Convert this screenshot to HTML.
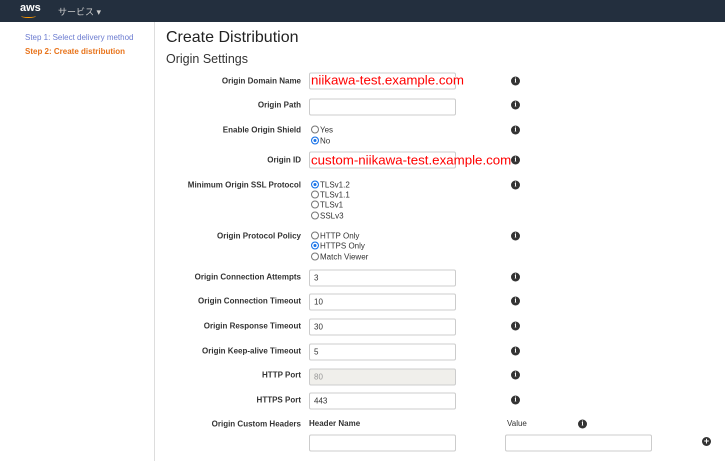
<!DOCTYPE html>
<html><head><meta charset="utf-8"><style>
body{margin:0;width:725px;height:461px;overflow:hidden;background:#fff;font-family:"Liberation Sans","Noto Sans CJK JP",sans-serif;position:relative}
.a{position:absolute}
.nav{left:0;top:0;width:725px;height:22px;background:#232f3e}
.lbl{position:absolute;right:424px;font-size:8px;font-weight:bold;color:#333;white-space:nowrap;transform:translateY(-50%)}
.inp{position:absolute;left:309px;border:1px solid #ccc;border-radius:2px;background:#fff;font-size:8px;color:#333;line-height:15px;padding-left:4px;box-sizing:border-box;width:147px;height:17px;transform:translateY(-50%)}
.info{position:absolute;left:511px;width:9px;height:9px;border-radius:50%;background:#333;color:#fff;font-size:7px;font-weight:bold;text-align:center;line-height:9px;font-family:"Liberation Serif",serif;transform:translateY(-50%)}
.rad{position:absolute;left:311px;font-size:8px;color:#333;transform:translateY(-50%);white-space:nowrap}
.rad i{display:inline-block;width:6px;height:6px;border:1px solid #777;border-radius:50%;vertical-align:-1px;margin-right:1px}
.rad i.on{background:#1a73e8;border-color:#1a73e8;box-shadow:inset 0 0 0 1.5px #fff}
.red{position:absolute;left:311px;font-size:13.3px;color:#f00;text-shadow:0 0 2px #fff,0 0 2px #fff;transform:translateY(-50%);white-space:nowrap}
</style></head><body>
<div class="a nav"></div>
<div class="a" style="left:20px;top:2px;color:#fff;font-size:11px;font-weight:bold">aws</div>
<div class="a" style="left:21px;top:14px;width:15px;height:3px;border-bottom:1.5px solid #f90;border-radius:0 0 50% 50%"></div>
<div class="a" style="left:58px;top:5px;color:#ccc;font-size:9px">サービス ▾</div>
<div class="a" style="left:154px;top:22px;width:1px;height:439px;background:#ddd"></div>
<div class="a" style="left:25px;top:33px;font-size:8px;color:#6b7bd0">Step 1: Select delivery method</div>
<div class="a" style="left:25px;top:47px;font-size:8px;color:#e8731a;font-weight:bold">Step 2: Create distribution</div>
<div class="a" style="left:166px;top:29px;font-size:16px;color:#222">Create Distribution</div>
<div class="a" style="left:166px;top:52px;font-size:12.5px;color:#333">Origin Settings</div>

<div class="lbl" style="top:81px">Origin Domain Name</div><div class="inp" style="top:81px"></div><div class="red" style="top:80px">niikawa-test.example.com</div><div class="info" style="top:81px">i</div>
<div class="lbl" style="top:105px">Origin Path</div><div class="inp" style="top:107px"></div><div class="info" style="top:105px">i</div>
<div class="lbl" style="top:130px">Enable Origin Shield</div><div class="rad" style="top:130px"><i></i>Yes</div><div class="rad" style="top:141px"><i class="on"></i>No</div><div class="info" style="top:130px">i</div>
<div class="lbl" style="top:160px">Origin ID</div><div class="inp" style="top:160px"></div><div class="red" style="top:160px">custom-niikawa-test.example.com</div><div class="info" style="top:160px">i</div>
<div class="lbl" style="top:185px">Minimum Origin SSL Protocol</div><div class="rad" style="top:185px"><i class="on"></i>TLSv1.2</div><div class="rad" style="top:195px"><i></i>TLSv1.1</div><div class="rad" style="top:205px"><i></i>TLSv1</div><div class="rad" style="top:216px"><i></i>SSLv3</div><div class="info" style="top:185px">i</div>
<div class="lbl" style="top:236px">Origin Protocol Policy</div><div class="rad" style="top:236px"><i></i>HTTP Only</div><div class="rad" style="top:246px"><i class="on"></i>HTTPS Only</div><div class="rad" style="top:257px"><i></i>Match Viewer</div><div class="info" style="top:236px">i</div>
<div class="lbl" style="top:277px">Origin Connection Attempts</div><div class="inp" style="top:278px">3</div><div class="info" style="top:277px">i</div>
<div class="lbl" style="top:301px">Origin Connection Timeout</div><div class="inp" style="top:302px">10</div><div class="info" style="top:301px">i</div>
<div class="lbl" style="top:326px">Origin Response Timeout</div><div class="inp" style="top:327px">30</div><div class="info" style="top:326px">i</div>
<div class="lbl" style="top:351px">Origin Keep-alive Timeout</div><div class="inp" style="top:352px">5</div><div class="info" style="top:351px">i</div>
<div class="lbl" style="top:375px">HTTP Port</div><div class="inp" style="top:377px;background:#f0efeb;color:#999">80</div><div class="info" style="top:375px">i</div>
<div class="lbl" style="top:400px">HTTPS Port</div><div class="inp" style="top:401px">443</div><div class="info" style="top:400px">i</div>
<div class="lbl" style="top:424px">Origin Custom Headers</div>
<div class="a" style="left:309px;top:419px;font-size:8px;font-weight:bold;color:#333">Header Name</div>
<div class="a" style="left:507px;top:419px;font-size:8px;color:#333">Value</div>
<div class="info" style="left:578px;top:424px">i</div>
<div class="inp" style="top:443px"></div>
<div class="inp" style="left:505px;top:443px"></div>
<div class="a" style="left:702px;top:437px;width:9px;height:9px;border-radius:50%;background:#333;color:#fff;font-size:9px;line-height:9px;text-align:center;font-weight:bold">+</div>
</body></html>
